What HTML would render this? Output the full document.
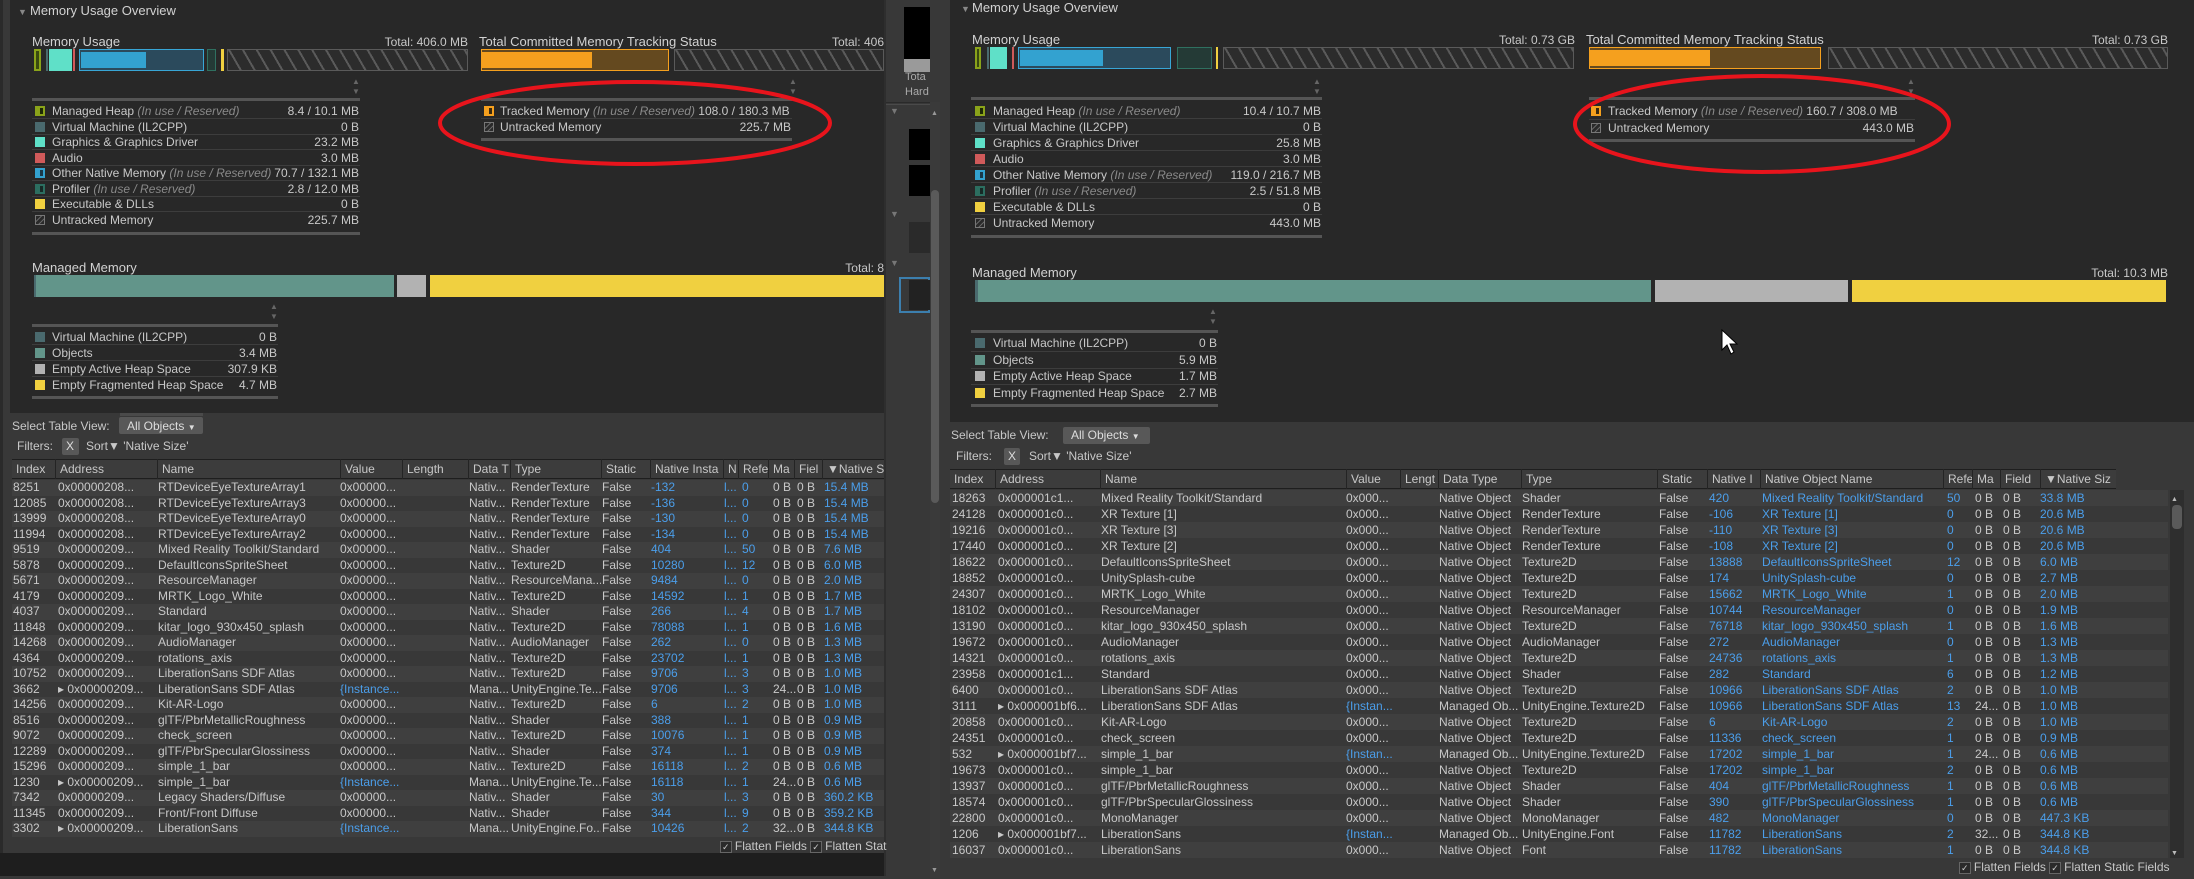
<!DOCTYPE html>
<html><head><meta charset="utf-8">
<style>
*{margin:0;padding:0;box-sizing:border-box}
body{width:2194px;height:876px;overflow:hidden;background:#383838;font-family:"Liberation Sans",sans-serif;font-size:12px;color:#c8c8c8;position:relative}
.a{position:absolute;white-space:nowrap;overflow:hidden}
.t{position:absolute;white-space:nowrap;height:16px;line-height:16px}
.hatch{position:absolute;border:1px solid #5a5a5a;background:repeating-linear-gradient(60deg,#2c2c2c 0 10px,#5a5a5a 10px 12px)}
.sep{position:absolute;height:3px;background:#555}
.rs{position:absolute;height:1px;background:#3c3c3c}
.i{font-style:italic;color:#8a8a8a}
.bl{color:#4b9eea}
</style></head><body>
<div id="root"></div>
<script>
const R=document.getElementById('root');
function B(x,y,w,h,st){const d=document.createElement('div');d.className='a';d.style.cssText=`left:${x}px;top:${y}px;width:${w}px;height:${h}px;`+(st||'');R.appendChild(d);return d;}
function T(x,y,html,st){const d=document.createElement('div');d.className='t';d.style.cssText=`left:${x}px;top:${y-8}px;`+(st||'');d.innerHTML=html;R.appendChild(d);return d;}
function TR(r,y,html,st){const d=document.createElement('div');d.className='t';d.style.cssText=`right:${2194-r}px;top:${y-8}px;`+(st||'');d.innerHTML=html;R.appendChild(d);return d;}
function H(x,y,w,h){const d=document.createElement('div');d.className='hatch';d.style.cssText=`left:${x}px;top:${y}px;width:${w}px;height:${h}px`;R.appendChild(d);}
function S(x,y,w,c){B(x,y,w,c?1:3,'background:'+(c?'#3d3d3d':'#555'));}
function sq(x,y,col,inner){B(x,y-5,10,10,'background:'+col+(inner?';border:2px solid '+col:''));if(inner)B(x+5,y-3,3,6,'background:'+inner);}
function unt(x,y){B(x,y-5,10,10,'border:1px solid #777;background:repeating-linear-gradient(-45deg,#2a2a2a 0 3px,#666 3px 4px)');}
function arrows(x,y){T(x-4,y,'<span style="font-size:8px;color:#666">▲</span>');T(x-4,y+10,'<span style="font-size:8px;color:#666">▼</span>');}

// ---------- LEFT PANEL ----------
B(0,0,884,853,'background:#383838');
B(0,0,3,853,'background:#2a2a2a');
B(10,0,874,413,'background:#282828');
T(18,11,'<span style="font-size:9px;color:#888">▼</span>');
T(30,11,'Memory Usage Overview',"font-size:13px;color:#d2d2d2");
T(32,42,'Memory Usage',"font-size:13px;color:#d2d2d2");
TR(468,42,'Total: 406.0 MB');
T(479,42,'Total Committed Memory Tracking Status',"font-size:13px;color:#d2d2d2");
TR(884,42,'Total: 406');
B(34,49,7,22,'border:2px solid #8aa31a;background:#3a4a10');
B(46,49,2,22,'background:#4a6a6e');
B(49,49,23,22,'background:#5fe0c8');
B(73,49,2,22,'background:#d05a5a');
B(79,49,125,22,'background:#2b4a5c;border:1px solid #38a6d6');
B(81,52,65,16,'background:#33a2d0');
B(207,49,9,22,'background:#243a36;border:1px solid #2f7060');
B(221,49,3,22,'background:#f0d040');
H(227,49,241,22);
B(481,49,188,22,'background:#64491f;border:1px solid #f5a01e');
B(482,52,110,16,'background:#f5a01e');
H(674,49,210,22);
arrows(356,80);arrows(793,80);
S(32,98,328);
const LL=[['Managed Heap <span class="i">(In use / Reserved)</span>','8.4 / 10.1 MB',['#8aa31a','#1e2a05']],
['Virtual Machine (IL2CPP)','0 B',['#4a6a6e']],['Graphics &amp; Graphics Driver','23.2 MB',['#5fe0c8']],
['Audio','3.0 MB',['#d05a5a']],['Other Native Memory <span class="i">(In use / Reserved)</span>','70.7 / 132.1 MB',['#33a2d0','#1a3a4a']],
['Profiler <span class="i">(In use / Reserved)</span>','2.8 / 12.0 MB',['#2c6e60','#172a26']],['Executable &amp; DLLs','0 B',['#f0d040']],['Untracked Memory','225.7 MB',null]];
const ly1=[111,127,142,158,173,189,204,220];
LL.forEach((r,i)=>{const y=ly1[i];if(r[2])sq(35,y,r[2][0],r[2][1]);else unt(35,y);T(52,y,r[0]);TR(359,y,r[1]);if(i<7)S(32,y+7,328,1);});
S(32,232,328);
S(481,98,311);
sq(484,111,'#f5a01e','#3a2a10');T(500,111,'Tracked Memory <span class="i">(In use / Reserved)</span> 108.0 / 180.3 MB');
S(481,118,311,1);
unt(484,127);T(500,127,'Untracked Memory');TR(791,127,'225.7 MB');
S(481,138,311);
T(32,268,'Managed Memory',"font-size:13px;color:#d2d2d2");TR(884,268,'Total: 8');
B(34,275,2,22,'background:#4a6a6e');
B(36,275,358,22,'background:#62958a');
B(397,275,29,22,'background:#b2b2b2');
B(430,275,454,22,'background:#f0d040');
arrows(274,305);
S(32,324,246);
const ML=[['Virtual Machine (IL2CPP)','0 B','#4a6a6e'],['Objects','3.4 MB','#62958a'],['Empty Active Heap Space','307.9 KB','#b2b2b2'],['Empty Fragmented Heap Space','4.7 MB','#f0d040']];
const my1=[337,353,369,385];
ML.forEach((r,i)=>{sq(35,my1[i],r[2]);T(52,my1[i],r[0]);TR(277,my1[i],r[1]);if(i<3)S(32,my1[i]+7,246,1);});
S(32,396,246);
B(120,413,83,3,'background:#4a4a4a');
T(12,426,'Select Table View:');
B(119,417,84,17,'background:#585858;border-radius:2px');T(127,426,'All Objects <span style="font-size:8px">▼</span>','color:#ddd');
T(17,446,'Filters:');
B(62,438,17,17,'background:#585858;border-radius:2px');T(66,446,'X','color:#ddd');
T(86,446,'Sort▼ \'Native Size\'');

// ---------- MIDDLE STRIP ----------
B(884,0,56,876,'background:#383838');
B(884,0,2,876,'background:#2e2e2e');
B(904,7,26,52,'background:#000');
B(904,59,26,13,'background:#9a9a9a');
T(905,77,'Tota','font-size:11px;color:#aaa');T(905,92,'Hard','font-size:11px;color:#aaa');
B(886,102,44,1,'background:#2a2a2a');B(886,104,44,1,'background:#4a4a4a');
T(890,110,'<span style="font-size:9px;color:#777">▼</span>');
B(909,129,21,31,'background:#000');B(909,165,21,31,'background:#000');
T(890,213,'<span style="font-size:9px;color:#777">▼</span>');
B(909,222,21,31,'background:#2a2a2a');
T(890,262,'<span style="font-size:9px;color:#777">▼</span>');
B(899,277,31,36,'border:2px solid #3c7fae;background:#383838');B(909,280,21,30,'background:#222');
B(930,102,10,776,'background:#3a3a3a');
B(931,190,8,313,'background:#5a5a5a;border-radius:4px');
T(931,111,'<span style="font-size:7px;color:#999">▲</span>');T(931,868,'<span style="font-size:7px;color:#999">▼</span>');

// ---------- RIGHT PANEL ----------
B(950,0,1244,422,'background:#282828');
B(940,0,10,876,'background:#383838');
T(961,8,'<span style="font-size:9px;color:#888">▼</span>');
T(972,8,'Memory Usage Overview',"font-size:13px;color:#d2d2d2");
T(972,40,'Memory Usage',"font-size:13px;color:#d2d2d2");
TR(1575,40,'Total: 0.73 GB');
T(1586,40,'Total Committed Memory Tracking Status',"font-size:13px;color:#d2d2d2");
TR(2168,40,'Total: 0.73 GB');
B(975,47,6,22,'border:2px solid #8aa31a;background:#3a4a10');
B(987,47,2,22,'background:#4a6a6e');
B(990,47,17,22,'background:#5fe0c8');
B(1012,47,2,22,'background:#d05a5a');
B(1018,47,153,22,'background:#2b4a5c;border:1px solid #38a6d6');
B(1020,50,83,16,'background:#33a2d0');
B(1177,47,35,22,'background:#243a36;border:1px solid #2f7060');
B(1216,47,2,22,'background:#f0d040');
H(1223,47,351,22);
B(1589,47,232,22,'background:#64491f;border:1px solid #f5a01e');
B(1590,50,120,16,'background:#f5a01e');
H(1828,47,340,22);
arrows(1317,80);arrows(1911,80);
S(971,97,351);
const RL=[['Managed Heap <span class="i">(In use / Reserved)</span>','10.4 / 10.7 MB',['#8aa31a','#1e2a05']],
['Virtual Machine (IL2CPP)','0 B',['#4a6a6e']],['Graphics &amp; Graphics Driver','25.8 MB',['#5fe0c8']],
['Audio','3.0 MB',['#d05a5a']],['Other Native Memory <span class="i">(In use / Reserved)</span>','119.0 / 216.7 MB',['#33a2d0','#1a3a4a']],
['Profiler <span class="i">(In use / Reserved)</span>','2.5 / 51.8 MB',['#2c6e60','#172a26']],['Executable &amp; DLLs','0 B',['#f0d040']],['Untracked Memory','443.0 MB',null]];
const ry1=[111,127,143,159,175,191,207,223];
RL.forEach((r,i)=>{const y=ry1[i];if(r[2])sq(975,y,r[2][0],r[2][1]);else unt(975,y);T(993,y,r[0]);TR(1321,y,r[1]);if(i<7)S(971,y+7,351,1);});
S(971,235,351);
S(1589,97,326);
sq(1591,111,'#f5a01e','#3a2a10');T(1608,111,'Tracked Memory <span class="i">(In use / Reserved)</span> 160.7 / 308.0 MB');
S(1589,119,326,1);
unt(1591,128);T(1608,128,'Untracked Memory');TR(1914,128,'443.0 MB');
S(1589,139,326);
T(972,273,'Managed Memory',"font-size:13px;color:#d2d2d2");TR(2168,273,'Total: 10.3 MB');
B(975,280,3,22,'background:#4a6a6e');
B(978,280,673,22,'background:#62958a');
B(1655,280,193,22,'background:#b2b2b2');
B(1852,280,314,22,'background:#f0d040');
arrows(1213,310);
S(971,330,247);
const MR=[['Virtual Machine (IL2CPP)','0 B','#4a6a6e'],['Objects','5.9 MB','#62958a'],['Empty Active Heap Space','1.7 MB','#b2b2b2'],['Empty Fragmented Heap Space','2.7 MB','#f0d040']];
const my2=[343,360,376,393];
MR.forEach((r,i)=>{sq(975,my2[i],r[2]);T(993,my2[i],r[0]);TR(1217,my2[i],r[1]);if(i<3)S(971,my2[i]+8,247,1);});
S(971,404,247);
T(951,435,'Select Table View:');
B(1063,427,87,17,'background:#585858;border-radius:2px');T(1071,435,'All Objects <span style="font-size:8px">▼</span>','color:#ddd');
T(956,456,'Filters:');
B(1004,448,16,17,'background:#585858;border-radius:2px');T(1008,456,'X','color:#ddd');
T(1029,456,'Sort▼ \'Native Size\'');

// ---------- TABLES ----------
function table(cfg){
 const {x0,x1,hy,hh,ry,rh,cols,rows}=cfg;
 B(x0,hy,x1-x0,hh,'background:#3c3c3c;border-top:1px solid #1e1e1e;border-bottom:1px solid #1e1e1e');
 cols.forEach((c,i)=>{ if(i>0)B(c[0]-1,hy,1,hh,'background:#242424'); const w=(i<cols.length-1?cols[i+1][0]:cfg.hx1)-c[0]-3; const d=B(c[0]+4,hy+1,w,hh-2,'line-height:'+(hh-2)+'px;color:#c8c8c8'); d.innerHTML=c[1]; });
 rows.forEach((r,j)=>{ const y=ry+j*rh; B(x0,y,x1-x0,rh,'background:'+(j%2?'#383838':'#3f3f3f'));
  r.forEach((v,k)=>{ if(v==='')return; const cx=cfg.tx[k]; const nx=(k<r.length-1?cfg.tx[k+1]:cfg.hx1); const d=B(cx,y,nx-cx-1,rh,'line-height:'+rh+'px;'+(cfg.blue(k,v)?'color:#4b9eea':'color:#c8c8c8')); d.innerHTML=v; });
 });
}
const LR=[
['8251','0x00000208...','RTDeviceEyeTextureArray1','0x00000...','','Nativ...','RenderTexture','False','-132','l...','0','0 B','0 B','15.4 MB'],
['12085','0x00000208...','RTDeviceEyeTextureArray3','0x00000...','','Nativ...','RenderTexture','False','-136','l...','0','0 B','0 B','15.4 MB'],
['13999','0x00000208...','RTDeviceEyeTextureArray0','0x00000...','','Nativ...','RenderTexture','False','-130','l...','0','0 B','0 B','15.4 MB'],
['11994','0x00000208...','RTDeviceEyeTextureArray2','0x00000...','','Nativ...','RenderTexture','False','-134','l...','0','0 B','0 B','15.4 MB'],
['9519','0x00000209...','Mixed Reality Toolkit/Standard','0x00000...','','Nativ...','Shader','False','404','l...','50','0 B','0 B','7.6 MB'],
['5878','0x00000209...','DefaultIconsSpriteSheet','0x00000...','','Nativ...','Texture2D','False','10280','l...','12','0 B','0 B','6.0 MB'],
['5671','0x00000209...','ResourceManager','0x00000...','','Nativ...','ResourceMana...','False','9484','l...','0','0 B','0 B','2.0 MB'],
['4179','0x00000209...','MRTK_Logo_White','0x00000...','','Nativ...','Texture2D','False','14592','l...','1','0 B','0 B','1.7 MB'],
['4037','0x00000209...','Standard','0x00000...','','Nativ...','Shader','False','266','l...','4','0 B','0 B','1.7 MB'],
['11848','0x00000209...','kitar_logo_930x450_splash','0x00000...','','Nativ...','Texture2D','False','78088','l...','1','0 B','0 B','1.6 MB'],
['14268','0x00000209...','AudioManager','0x00000...','','Nativ...','AudioManager','False','262','l...','0','0 B','0 B','1.3 MB'],
['4364','0x00000209...','rotations_axis','0x00000...','','Nativ...','Texture2D','False','23702','l...','1','0 B','0 B','1.3 MB'],
['10752','0x00000209...','LiberationSans SDF Atlas','0x00000...','','Nativ...','Texture2D','False','9706','l...','3','0 B','0 B','1.0 MB'],
['3662','▸ 0x00000209...','LiberationSans SDF Atlas','{Instance...','','Mana...','UnityEngine.Te...','False','9706','l...','3','24...','0 B','1.0 MB'],
['14256','0x00000209...','Kit-AR-Logo','0x00000...','','Nativ...','Texture2D','False','6','l...','2','0 B','0 B','1.0 MB'],
['8516','0x00000209...','glTF/PbrMetallicRoughness','0x00000...','','Nativ...','Shader','False','388','l...','1','0 B','0 B','0.9 MB'],
['9072','0x00000209...','check_screen','0x00000...','','Nativ...','Texture2D','False','10076','l...','1','0 B','0 B','0.9 MB'],
['12289','0x00000209...','glTF/PbrSpecularGlossiness','0x00000...','','Nativ...','Shader','False','374','l...','1','0 B','0 B','0.9 MB'],
['15296','0x00000209...','simple_1_bar','0x00000...','','Nativ...','Texture2D','False','16118','l...','2','0 B','0 B','0.6 MB'],
['1230','▸ 0x00000209...','simple_1_bar','{Instance...','','Mana...','UnityEngine.Te...','False','16118','l...','1','24...','0 B','0.6 MB'],
['7342','0x00000209...','Legacy Shaders/Diffuse','0x00000...','','Nativ...','Shader','False','30','l...','3','0 B','0 B','360.2 KB'],
['11345','0x00000209...','Front/Front Diffuse','0x00000...','','Nativ...','Shader','False','344','l...','9','0 B','0 B','359.2 KB'],
['3302','▸ 0x00000209...','LiberationSans','{Instance...','','Mana...','UnityEngine.Fo...','False','10426','l...','2','32...','0 B','344.8 KB']];
table({x0:12,x1:884,hx1:884,hy:459,hh:20,ry:480,rh:15.5,
 cols:[[12,'Index'],[56,'Address'],[158,'Name'],[341,'Value'],[403,'Length'],[469,'Data T'],[511,'Type'],[602,'Static'],[651,'Native Insta'],[724,'N'],[739,'Refe'],[769,'Ma'],[795,'Fiel'],[823,'▼Native S']],
 tx:[13,58,158,340,406,469,511,602,651,724,742,773,797,824],
 rows:LR, blue:(k,v)=>k==8||k==9||k==10||k==13||(k==3&&v[0]=='{')});
B(0,853,884,23,'background:#1e1e1e');
T(720,846,'<span style="border:1px solid #666;background:#2a2a2a;font-size:9px;padding:0 1px">✓</span> Flatten Fields <span style="border:1px solid #666;background:#2a2a2a;font-size:9px;padding:0 1px">✓</span> Flatten Stat');

const RRw=[
['18263','0x000001c1...','Mixed Reality Toolkit/Standard','0x000...','','Native Object','Shader','False','420','Mixed Reality Toolkit/Standard','50','0 B','0 B','33.8 MB'],
['24128','0x000001c0...','XR Texture [1]','0x000...','','Native Object','RenderTexture','False','-106','XR Texture [1]','0','0 B','0 B','20.6 MB'],
['19216','0x000001c0...','XR Texture [3]','0x000...','','Native Object','RenderTexture','False','-110','XR Texture [3]','0','0 B','0 B','20.6 MB'],
['17440','0x000001c0...','XR Texture [2]','0x000...','','Native Object','RenderTexture','False','-108','XR Texture [2]','0','0 B','0 B','20.6 MB'],
['18622','0x000001c0...','DefaultIconsSpriteSheet','0x000...','','Native Object','Texture2D','False','13888','DefaultIconsSpriteSheet','12','0 B','0 B','6.0 MB'],
['18852','0x000001c0...','UnitySplash-cube','0x000...','','Native Object','Texture2D','False','174','UnitySplash-cube','0','0 B','0 B','2.7 MB'],
['24307','0x000001c0...','MRTK_Logo_White','0x000...','','Native Object','Texture2D','False','15662','MRTK_Logo_White','1','0 B','0 B','2.0 MB'],
['18102','0x000001c0...','ResourceManager','0x000...','','Native Object','ResourceManager','False','10744','ResourceManager','0','0 B','0 B','1.9 MB'],
['13190','0x000001c0...','kitar_logo_930x450_splash','0x000...','','Native Object','Texture2D','False','76718','kitar_logo_930x450_splash','1','0 B','0 B','1.6 MB'],
['19672','0x000001c0...','AudioManager','0x000...','','Native Object','AudioManager','False','272','AudioManager','0','0 B','0 B','1.3 MB'],
['14321','0x000001c0...','rotations_axis','0x000...','','Native Object','Texture2D','False','24736','rotations_axis','1','0 B','0 B','1.3 MB'],
['23958','0x000001c1...','Standard','0x000...','','Native Object','Shader','False','282','Standard','6','0 B','0 B','1.2 MB'],
['6400','0x000001c0...','LiberationSans SDF Atlas','0x000...','','Native Object','Texture2D','False','10966','LiberationSans SDF Atlas','2','0 B','0 B','1.0 MB'],
['3111','▸ 0x000001bf6...','LiberationSans SDF Atlas','{Instan...','','Managed Ob...','UnityEngine.Texture2D','False','10966','LiberationSans SDF Atlas','13','24...','0 B','1.0 MB'],
['20858','0x000001c0...','Kit-AR-Logo','0x000...','','Native Object','Texture2D','False','6','Kit-AR-Logo','2','0 B','0 B','1.0 MB'],
['24351','0x000001c0...','check_screen','0x000...','','Native Object','Texture2D','False','11336','check_screen','1','0 B','0 B','0.9 MB'],
['532','▸ 0x000001bf7...','simple_1_bar','{Instan...','','Managed Ob...','UnityEngine.Texture2D','False','17202','simple_1_bar','1','24...','0 B','0.6 MB'],
['19673','0x000001c0...','simple_1_bar','0x000...','','Native Object','Texture2D','False','17202','simple_1_bar','2','0 B','0 B','0.6 MB'],
['13937','0x000001c0...','glTF/PbrMetallicRoughness','0x000...','','Native Object','Shader','False','404','glTF/PbrMetallicRoughness','1','0 B','0 B','0.6 MB'],
['18574','0x000001c0...','glTF/PbrSpecularGlossiness','0x000...','','Native Object','Shader','False','390','glTF/PbrSpecularGlossiness','1','0 B','0 B','0.6 MB'],
['22800','0x000001c0...','MonoManager','0x000...','','Native Object','MonoManager','False','482','MonoManager','0','0 B','0 B','447.3 KB'],
['1206','▸ 0x000001bf7...','LiberationSans','{Instan...','','Managed Ob...','UnityEngine.Font','False','11782','LiberationSans','2','32...','0 B','344.8 KB'],
['16037','0x000001c0...','LiberationSans','0x000...','','Native Object','Font','False','11782','LiberationSans','1','0 B','0 B','344.8 KB']];
table({x0:950,x1:2168,hx1:2116,hy:469,hh:20,ry:490,rh:16,
 cols:[[950,'Index'],[996,'Address'],[1101,'Name'],[1347,'Value'],[1401,'Lengt'],[1439,'Data Type'],[1522,'Type'],[1658,'Static'],[1708,'Native I'],[1761,'Native Object Name'],[1944,'Refe'],[1973,'Ma'],[2001,'Field'],[2041,'▼Native Siz']],
 tx:[952,998,1101,1346,1402,1439,1522,1659,1709,1762,1947,1975,2003,2040],
 rows:RRw, blue:(k,v)=>k==8||k==9||k==10||k==13||(k==3&&v[0]=='{')});
B(2116,469,52,20,'background:#383838');
B(2170,490,14,368,'background:#2e2e2e');B(2172,505,10,24,'background:#5a5a5a;border-radius:4px');
T(2171,497,'<span style="font-size:7px;color:#bbb">▲</span>');T(2171,851,'<span style="font-size:7px;color:#bbb">▼</span>');
T(1959,867,'<span style="border:1px solid #666;background:#2a2a2a;font-size:9px;padding:0 1px">✓</span> Flatten Fields <span style="border:1px solid #666;background:#2a2a2a;font-size:9px;padding:0 1px">✓</span> Flatten Static Fields');
</script>
<svg style="position:absolute;left:0;top:0" width="2194" height="876">
<ellipse cx="635" cy="123" rx="195" ry="41" fill="none" stroke="#e8141c" stroke-width="4"/>
<ellipse cx="1762" cy="124" rx="187" ry="48" fill="none" stroke="#e8141c" stroke-width="4"/>
<path d="M1722 330 L1722 350 L1727 345 L1731 354 L1734 352 L1730 344 L1737 344 Z" fill="#fff" stroke="#000" stroke-width="1"/>
</svg>
</body></html>
